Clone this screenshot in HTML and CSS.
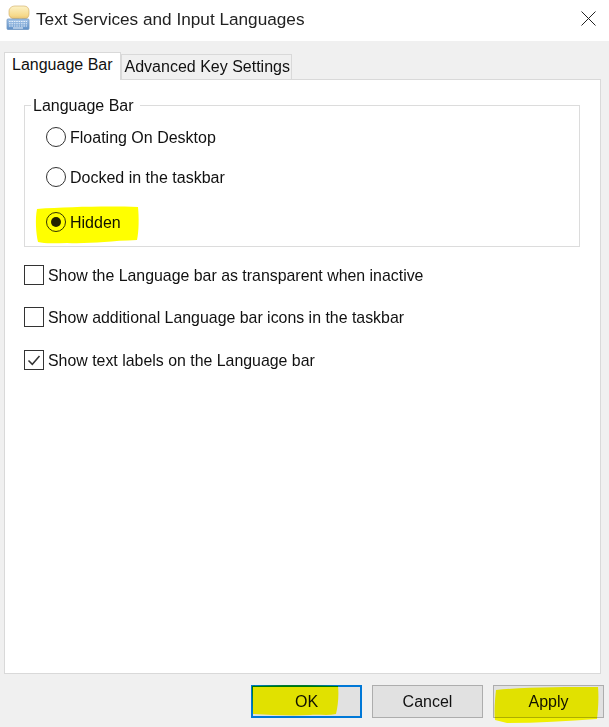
FILE: index.html
```html
<!DOCTYPE html>
<html lang="en">
<head>
    <meta charset="UTF-8">
    <meta name="viewport" content="width=device-width, initial-scale=1.0">
    <title>Text Services and Input Languages</title>
    <link rel="stylesheet" href="styles.css">
</head>
<body>
    <header class="titlebar">
        <svg class="app-icon" width="24" height="26" viewBox="0 0 24 26">
            <defs>
                <linearGradient id="bubble" x1="0" y1="0" x2="0" y2="1">
                    <stop offset="0" stop-color="#fdf3c8"/>
                    <stop offset="0.6" stop-color="#f6d98a"/>
                    <stop offset="1" stop-color="#d9a95a"/>
                </linearGradient>
                <linearGradient id="keys" x1="0" y1="0" x2="0" y2="1">
                    <stop offset="0" stop-color="#a9c8ea"/>
                    <stop offset="1" stop-color="#5f8fc6"/>
                </linearGradient>
            </defs>
            <path d="M9 1h9c3 0 5 2 5 5v3c0 3-2 5-5 5h-2l-3 3v-3H9c-3 0-6-2-6-5V6c0-3 3-5 6-5z" fill="url(#bubble)" stroke="#cfa860" stroke-width="0.6"/>
            <rect x="1" y="14" width="22" height="10.500" rx="1" fill="url(#keys)" stroke="#6e97c4" stroke-width="0.8"/>
            <path d="M3 16.500h18M3 18.800h18M3 21h18" stroke="#e6f0fb" stroke-width="1" stroke-dasharray="1.600 0.800"/>
            <path d="M7 23h10" stroke="#f2f7fd" stroke-width="1"/>
        </svg>
        <h1>Text Services and Input Languages</h1>
        <svg class="close" width="15" height="15" viewBox="0 0 15 15">
            <path d="M0.500 0.500l14 14M14.500 0.500l-14 14" stroke="#222" stroke-width="1" fill="none"/>
        </svg>
    </header>

    <div class="dialog">
        <div class="tabs">
            <div class="tab active">Language Bar</div>
            <div class="tab">Advanced Key Settings</div>
        </div>

        <main class="panel">
            <fieldset class="group">
                <legend>Language Bar</legend>
                <div class="radio-row first"><span class="radio"></span>Floating On Desktop</div>
                <div class="radio-row"><span class="radio"></span>Docked in the taskbar</div>
                <div class="radio-row last"><span class="radio checked"></span>Hidden</div>
            </fieldset>

            <div class="check-row"><span class="check"></span>Show the Language bar as transparent when inactive</div>
            <div class="check-row"><span class="check"></span>Show additional Language bar icons in the taskbar</div>
            <div class="check-row">
                <span class="check">
                    <svg width="18" height="18" viewBox="0 0 18 18"><path d="M3.500 9.500l3.800 3.800 7.200-8.300" stroke="#333" stroke-width="1.500" fill="none"/></svg>
                </span>
                Show text labels on the Language bar
            </div>
        </main>

        <div class="buttons">
            <button class="default">OK</button>
            <button>Cancel</button>
            <button>Apply</button>
        </div>
    </div>

    <!-- marker scribbles drawn over the dialog -->
    <svg class="marker" width="609" height="727" viewBox="0 0 609 727">
        <path d="M37 209c30-2 68-3 101-2 1 10 1 24-1 33-30 1-46 4-70 3-10 0-22 1-29-1-2-9-3-23-1-33z"/>
        <path d="M252 686c25-1 60-1 86 0 1 9 0 20-2 28-9 2-18 0-26 1-18 1-40 0-57-1z"/>
        <path d="M496 690c30-3 70-3 102-3 1 11 0 23-1 32-30 2-60 4-90 4l-12-3c-1-10 0-21 1-30z"/>
    </svg>
</body>
</html>
```

FILE: styles.css
```css
html, body {
    margin: 0;
    padding: 0;
}
body {
    position: relative;
    width: 609px;
    height: 727px;
    overflow: hidden;
    background-color: #f0f0f0;
    color: #111;
    font-family: 'Liberation Sans', Arial, sans-serif;
    font-size: 16px;
}
.titlebar {
    display: flex;
    align-items: center;
    height: 41px;
    padding: 0 13px 5px 6px;
    box-sizing: border-box;
    background-color: white;
}
.app-icon {
    flex: none;
}
.titlebar h1 {
    flex: 1;
    margin: 0 0 0 6px;
    padding-top: 3px;
    font-size: 17.200px;
    font-weight: normal;
    color: #222;
}
.dialog {
    padding: 11px 8px 0 4px;
}
.tabs {
    display: flex;
    align-items: flex-end;
    height: 27px;
}
.tab {
    height: 25px;
    line-height: 23px;
    padding: 0 1px 0 3px;
    box-sizing: border-box;
    border: 1px solid #d9d9d9;
    border-bottom: none;
    background-color: #f0f0f0;
}
.tab.active {
    position: relative;
    z-index: 1;
    height: 28px;
    line-height: 24px;
    margin-bottom: -1px;
    padding: 0 7px;
    background-color: white;
}
.panel {
    height: 595px;
    box-sizing: border-box;
    padding: 16px 20px 0 19px;
    border: 1px solid #d9d9d9;
    background-color: white;
}
.group {
    margin: 0;
    padding: 0 0 0 21px;
    min-width: 0;
    height: 151px;
    box-sizing: border-box;
    border: 1px solid #dcdcdc;
}
.group legend {
    margin-left: -15px;
    padding: 2px 6px 0 2px;
    line-height: 16px;
}
.radio-row {
    display: flex;
    align-items: center;
    gap: 4px;
    height: 22px;
    margin-top: 18px;
}
.radio-row.first {
    margin-top: 13px;
}
.radio-row.last {
    margin-top: 23px;
}
.radio {
    flex: none;
    display: flex;
    align-items: center;
    justify-content: center;
    width: 20px;
    height: 20px;
    margin-bottom: 2px;
    box-sizing: border-box;
    border: 1px solid #333;
    border-radius: 50%;
    background-color: white;
}
.radio.checked::before {
    content: "";
    width: 10px;
    height: 10px;
    border-radius: 50%;
    background-color: #222;
}
.check-row {
    display: flex;
    align-items: center;
    gap: 4px;
    height: 22px;
    margin-top: 18px;
    font-size: 15.900px;
}
.check-row + .check-row {
    margin-top: 20px;
}
.check-row:last-child {
    margin-top: 21px;
}
.check {
    flex: none;
    display: flex;
    width: 20px;
    height: 20px;
    margin-bottom: 2px;
    box-sizing: border-box;
    border: 1px solid #333;
    background-color: white;
}
.buttons {
    display: flex;
    justify-content: flex-end;
    gap: 10px;
    margin: 11px -3px 0 0;
}
.buttons button {
    width: 111px;
    height: 33px;
    padding: 0;
    box-sizing: border-box;
    border: 1px solid #adadad;
    background-color: #e1e1e1;
    color: #111;
    font-family: inherit;
    font-size: 16px;
}
.buttons button.default {
    border: 2px solid #0078d7;
}
.marker {
    position: absolute;
    top: 0;
    left: 0;
    mix-blend-mode: multiply;
    pointer-events: none;
}
.marker path {
    fill: #ffff00;
}
```
